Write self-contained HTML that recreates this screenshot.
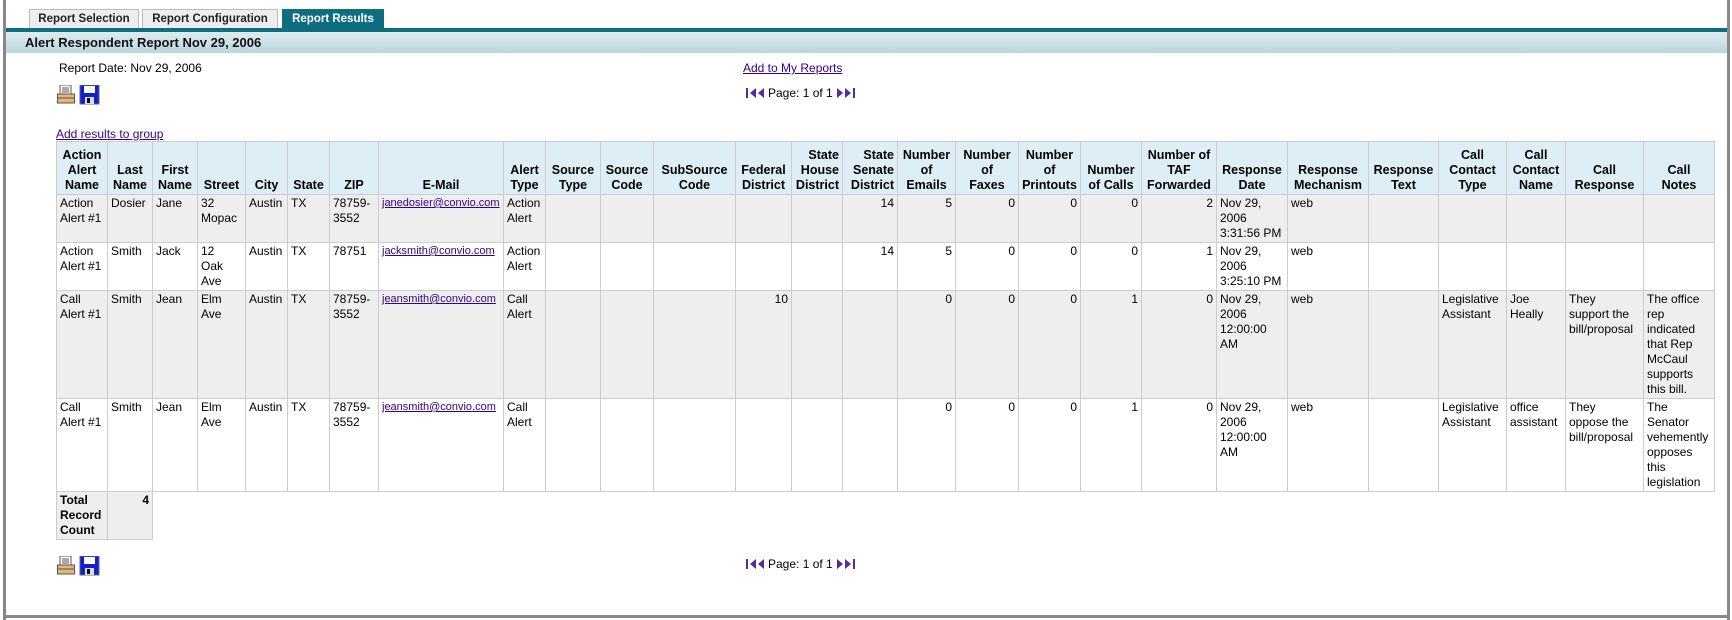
<!DOCTYPE html>
<html><head><meta charset="utf-8"><style>
*{margin:0;padding:0;box-sizing:border-box}
body{width:1732px;height:620px;background:#fff;font-family:"Liberation Sans",Arial,sans-serif;font-size:12px;color:#000;position:relative;overflow:hidden}
.lb{position:absolute;left:3px;top:0;width:3px;height:620px;background:#888}
.rb{position:absolute;left:1727px;top:0;width:3px;height:620px;background:#888}
.bb{position:absolute;left:3px;top:615px;width:1727px;height:3px;background:#888}
.tab{position:absolute;top:9px;height:20px;border:1px solid #bbb;border-bottom:none;background:#eee;font-weight:bold;font-size:11.5px;text-align:center;line-height:19px;color:#222}
.tab.on{background:#0e6e80;color:#fff;border-color:#0e6e80}
.teal{position:absolute;left:6px;top:28px;width:1721px;height:4px;background:#0e6e80}
.band{position:absolute;left:6px;top:32px;width:1721px;height:21px;background:linear-gradient(#dfecf0,#b9d6de);font-weight:bold;font-size:13px;line-height:21px;padding-left:19px;color:#111}
.a{color:#330088;text-decoration:underline}
.abs{position:absolute}
table{position:absolute;left:56px;top:141px;border-collapse:collapse;table-layout:fixed;width:1658px}
td,th{border:1px solid #ccc;padding:1px 3px;vertical-align:top;line-height:15px;font-size:12px;font-weight:normal;overflow:hidden;white-space:nowrap}
th{background:#ddeef6;font-weight:bold;vertical-align:bottom;text-align:center;height:53px;font-size:12.5px}
tr.g td{background:#eee}
td.n{text-align:right}
td.e{font-size:11px}
td.e span{color:#330088;text-decoration:underline}
.nav{position:absolute;font-size:12px;display:flex;align-items:center;gap:2px}
.tri{display:inline-block;width:0;height:0;border-top:5px solid transparent;border-bottom:5px solid transparent}
.tl{border-right:6px solid #5a2a9a}.tr{border-left:6px solid #5a2a9a}
.bar{display:inline-block;width:2px;height:10px;background:#5a2a9a}
</style></head><body>
<div class="lb"></div><div class="rb"></div><div class="bb"></div>
<div class="tab" style="left:29px;width:110px">Report Selection</div>
<div class="tab" style="left:142px;width:136px">Report Configuration</div>
<div class="tab on" style="left:282px;width:102px">Report Results</div>
<div class="teal"></div>
<div class="band">Alert Respondent Report Nov 29, 2006</div>
<div class="abs" style="left:59px;top:61px">Report Date: Nov 29, 2006</div>
<div class="abs a" style="left:743px;top:61px">Add to My Reports</div>
<div class="nav" style="left:746px;top:86px"><span class="bar"></span><span class="tri tl"></span><span class="tri tl"></span><span style="margin:0 2px">Page: 1 of 1</span><span class="tri tr"></span><span class="tri tr"></span><span class="bar"></span></div>
<svg class="abs" style="left:57px;top:85px" width="44" height="20" viewBox="0 0 44 20">
<rect x="3" y="0" width="11" height="9" fill="#fff" stroke="#555"/><line x1="5" y1="3" x2="12" y2="3" stroke="#555"/><line x1="5" y1="5" x2="12" y2="5" stroke="#555"/><line x1="5" y1="7" x2="12" y2="7" stroke="#555"/>
<rect x="0.5" y="9" width="17" height="9" fill="#e8b47a" stroke="#555"/><line x1="1" y1="13" x2="17" y2="13" stroke="#555"/>
<rect x="23" y="0" width="19" height="19" fill="#1020d0" stroke="#666"/><rect x="27" y="1" width="11" height="7" fill="#fff"/><rect x="28" y="12" width="9" height="7" fill="#ddd"/><rect x="30" y="13" width="3" height="5" fill="#000"/></svg>
<div class="abs a" style="left:56px;top:127px">Add results to group</div>
<table>
<colgroup><col style="width:51px"><col style="width:45px"><col style="width:45px"><col style="width:48px"><col style="width:42px"><col style="width:42px"><col style="width:49px"><col style="width:125px"><col style="width:42px"><col style="width:55px"><col style="width:53px"><col style="width:82px"><col style="width:56px"><col style="width:51px"><col style="width:55px"><col style="width:58px"><col style="width:63px"><col style="width:62px"><col style="width:61px"><col style="width:75px"><col style="width:71px"><col style="width:81px"><col style="width:70px"><col style="width:68px"><col style="width:59px"><col style="width:78px"><col style="width:71px"></colgroup>
<tr><th>Action<br>Alert<br>Name</th><th>Last<br>Name</th><th>First<br>Name</th><th>Street</th><th>City</th><th>State</th><th>ZIP</th><th>E-Mail</th><th>Alert<br>Type</th><th>Source<br>Type</th><th>Source<br>Code</th><th>SubSource<br>Code</th><th>Federal<br>District</th><th style="text-align:right">State<br>House<br>District</th><th style="text-align:right">State<br>Senate<br>District</th><th>Number<br>of<br>Emails</th><th>Number<br>of<br>Faxes</th><th>Number<br>of<br>Printouts</th><th>Number<br>of Calls</th><th>Number of<br>TAF<br>Forwarded</th><th>Response<br>Date</th><th>Response<br>Mechanism</th><th>Response<br>Text</th><th>Call<br>Contact<br>Type</th><th>Call<br>Contact<br>Name</th><th>Call<br>Response</th><th>Call<br>Notes</th></tr>
<tr class="g" style="height:48px"><td>Action<br>Alert #1</td><td>Dosier</td><td>Jane</td><td>32<br>Mopac</td><td>Austin</td><td>TX</td><td>78759-<br>3552</td><td class="e"><span>janedosier@convio.com</span></td><td>Action<br>Alert</td><td></td><td></td><td></td><td></td><td></td><td class="n">14</td><td class="n">5</td><td class="n">0</td><td class="n">0</td><td class="n">0</td><td class="n">2</td><td>Nov 29,<br>2006<br>3:31:56 PM</td><td>web</td><td></td><td></td><td></td><td></td><td></td></tr>
<tr style="height:48px"><td>Action<br>Alert #1</td><td>Smith</td><td>Jack</td><td>12<br>Oak<br>Ave</td><td>Austin</td><td>TX</td><td>78751</td><td class="e"><span>jacksmith@convio.com</span></td><td>Action<br>Alert</td><td></td><td></td><td></td><td></td><td></td><td class="n">14</td><td class="n">5</td><td class="n">0</td><td class="n">0</td><td class="n">0</td><td class="n">1</td><td>Nov 29,<br>2006<br>3:25:10 PM</td><td>web</td><td></td><td></td><td></td><td></td><td></td></tr>
<tr class="g" style="height:108px"><td>Call<br>Alert #1</td><td>Smith</td><td>Jean</td><td>Elm<br>Ave</td><td>Austin</td><td>TX</td><td>78759-<br>3552</td><td class="e"><span>jeansmith@convio.com</span></td><td>Call<br>Alert</td><td></td><td></td><td></td><td class="n">10</td><td></td><td></td><td class="n">0</td><td class="n">0</td><td class="n">0</td><td class="n">1</td><td class="n">0</td><td>Nov 29,<br>2006<br>12:00:00<br>AM</td><td>web</td><td></td><td>Legislative<br>Assistant</td><td>Joe<br>Heally</td><td>They<br>support the<br>bill/proposal</td><td>The office<br>rep<br>indicated<br>that Rep<br>McCaul<br>supports<br>this bill.</td></tr>
<tr style="height:93px"><td>Call<br>Alert #1</td><td>Smith</td><td>Jean</td><td>Elm<br>Ave</td><td>Austin</td><td>TX</td><td>78759-<br>3552</td><td class="e"><span>jeansmith@convio.com</span></td><td>Call<br>Alert</td><td></td><td></td><td></td><td></td><td></td><td></td><td class="n">0</td><td class="n">0</td><td class="n">0</td><td class="n">1</td><td class="n">0</td><td>Nov 29,<br>2006<br>12:00:00<br>AM</td><td>web</td><td></td><td>Legislative<br>Assistant</td><td>office<br>assistant</td><td>They<br>oppose the<br>bill/proposal</td><td>The<br>Senator<br>vehemently<br>opposes<br>this<br>legislation</td></tr>
<tr class="g" style="height:48px"><td style="font-weight:bold">Total<br>Record<br>Count</td><td class="n" style="font-weight:bold">4</td><td colspan="25" style="background:#fff;border:none;border-top:1px solid #ccc"></td></tr>
</table>
<svg class="abs" style="left:57px;top:556px" width="44" height="20" viewBox="0 0 44 20">
<rect x="3" y="0" width="11" height="9" fill="#fff" stroke="#555"/><line x1="5" y1="3" x2="12" y2="3" stroke="#555"/><line x1="5" y1="5" x2="12" y2="5" stroke="#555"/><line x1="5" y1="7" x2="12" y2="7" stroke="#555"/>
<rect x="0.5" y="9" width="17" height="9" fill="#e8b47a" stroke="#555"/><line x1="1" y1="13" x2="17" y2="13" stroke="#555"/>
<rect x="23" y="0" width="19" height="19" fill="#1020d0" stroke="#666"/><rect x="27" y="1" width="11" height="7" fill="#fff"/><rect x="28" y="12" width="9" height="7" fill="#ddd"/><rect x="30" y="13" width="3" height="5" fill="#000"/></svg>
<div class="nav" style="left:746px;top:557px"><span class="bar"></span><span class="tri tl"></span><span class="tri tl"></span><span style="margin:0 2px">Page: 1 of 1</span><span class="tri tr"></span><span class="tri tr"></span><span class="bar"></span></div>
</body></html>
